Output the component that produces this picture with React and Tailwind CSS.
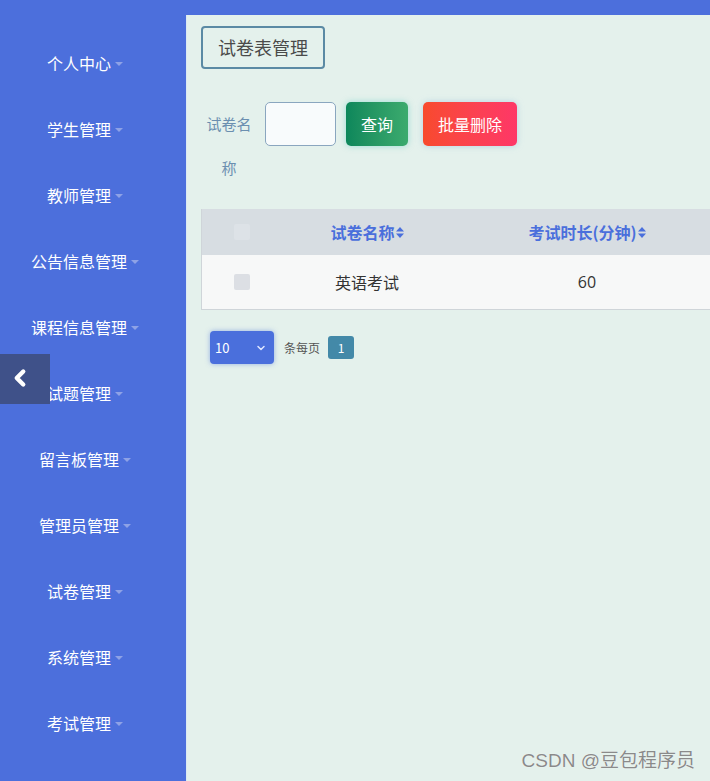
import { ChevronLeft, ChevronDown } from "lucide-react";

const menus = [
  "个人中心",
  "学生管理",
  "教师管理",
  "公告信息管理",
  "课程信息管理",
  "试题管理",
  "留言板管理",
  "管理员管理",
  "试卷管理",
  "系统管理",
  "考试管理",
];

function SortIcon() {
  return (
    <svg width="8" height="11" viewBox="0 0 8 11" className="ml-[1px] inline-block">
      <path d="M4 0 L8 4.5 L0 4.5 Z" fill="#4a6fdc" />
      <path d="M4 11 L8 6.5 L0 6.5 Z" fill="#4a6fdc" />
    </svg>
  );
}

export default function App() {
  return (
    <div
      className="relative w-[710px] h-[781px] overflow-hidden bg-[#4c6fdc] flex"
      style={{ fontFamily: '"Noto Sans CJK SC", "Noto Sans", sans-serif' }}
    >
      {/* sidebar */}
      <div className="w-[186px] shrink-0 pt-[30px] pr-[16px]">
        {menus.map((m) => (
          <div key={m} className="h-[66px] flex items-center justify-center text-white text-[16px]">
            <span>{m}</span>
            <span className="ml-[4px] mt-[1px] w-0 h-0 border-l-[4px] border-r-[4px] border-t-[4px] border-l-transparent border-r-transparent border-t-[#8ea2e6]" />
          </div>
        ))}
      </div>

      <button className="absolute left-0 top-[354px] w-[50px] h-[50px] bg-[#3f5189] flex items-center justify-center">
        <ChevronLeft size={26} strokeWidth={4} color="#fff" className="-ml-[10px] -mt-[3px]" />
      </button>

      {/* main */}
      <div className="mt-[15px] flex-1 bg-[#e4f1ec] border-l border-[#dbe9f3] pl-[14px] pt-[11px] overflow-hidden">
        <div className="inline-flex items-center justify-center w-[124px] h-[43px] border-2 border-[#5b8aa4] rounded-[4px] text-[18px] text-[#4a4a4a]">
          试卷表管理
        </div>

        <div className="mt-[33px] flex items-start">
          <div className="w-[58px] text-center text-[15px] leading-[44px] text-[#6b8fb0] pl-[3px] pr-[5px]">
            试卷名称
          </div>
          <input className="w-[71px] h-[44px] ml-[6px] rounded-[5px] border border-[#8aa6bf] bg-[#f8fbfc] outline-none" />
          <button className="ml-[10px] w-[62px] h-[44px] rounded-[5px] bg-gradient-to-r from-[#0c875b] to-[#3bab6e] text-white text-[16px] shadow-[0_0_6px_rgba(80,200,190,0.5)]">
            查询
          </button>
          <button className="ml-[15px] w-[94px] h-[44px] rounded-[5px] bg-gradient-to-r from-[#f84a2c] to-[#fe3767] text-white text-[16px] shadow-[0_0_6px_rgba(150,190,220,0.6)]">
            批量删除
          </button>
        </div>

        <div className="mt-[19px] w-[540px] border-l border-b border-[#cfd5d9]">
          <div className="flex h-[46px] items-center bg-[#d7dde2] text-[#4a6fdc] text-[16px] font-bold">
            <div className="w-[80px] flex justify-center">
              <span className="w-[16px] h-[16px] bg-[#dde2e7] rounded-[2px]" />
            </div>
            <div className="w-[170px] flex items-center justify-center">
              试卷名称<SortIcon />
            </div>
            <div className="w-[270px] flex items-center justify-center">
              考试时长(分钟)<SortIcon />
            </div>
          </div>
          <div className="flex h-[54px] items-center bg-[#f7f8f8] text-[#333] text-[16px]">
            <div className="w-[80px] flex justify-center">
              <span className="w-[16px] h-[16px] bg-[#dcdfe4] rounded-[2px]" />
            </div>
            <div className="w-[170px] text-center">英语考试</div>
            <div className="w-[270px] text-center" style={{ fontFamily: '"Open Sans", "Noto Sans", sans-serif' }}>60</div>
          </div>
        </div>

        <div className="mt-[21px] ml-[9px] flex items-center">
          <div className="w-[64px] h-[33px] rounded-[4px] bg-[#4a6fdc] shadow-[0_0_5px_rgba(74,111,220,0.5)] flex items-center justify-between pl-[5px] pr-[7px] text-white text-[13px]">
            <span>10</span>
            <ChevronDown size={12} strokeWidth={3} color="#dfe6ff" />
          </div>
          <span className="ml-[10px] text-[12px] text-[#555]">条每页</span>
          <span className="ml-[8px] w-[26px] h-[23px] rounded-[3px] bg-[#4389a8] text-white text-[12px] flex items-center justify-center">
            1
          </span>
        </div>
      </div>

      <div
        className="absolute right-[15px] bottom-[6px] text-[19px] text-[#8a8a8a] [text-shadow:0_0_1px_#fff]"
        style={{ fontFamily: '"Liberation Sans", "Noto Sans CJK SC", sans-serif' }}
      >
        CSDN @豆包程序员
      </div>
    </div>
  );
}
